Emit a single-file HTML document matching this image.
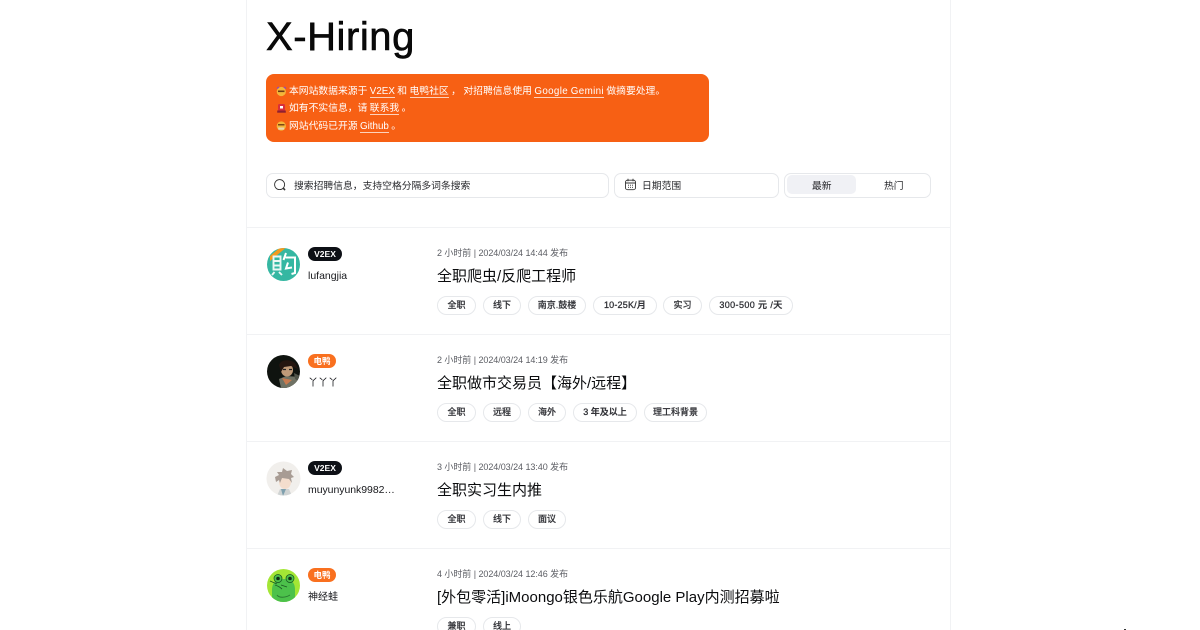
<!DOCTYPE html>
<html lang="zh"><head><meta charset="utf-8"><title>X-Hiring</title>
<style>
*{box-sizing:border-box}
html,body{margin:0;padding:0;width:1200px;height:630px;overflow:hidden;background:#fff}
body{font-family:"Liberation Sans","Noto Sans CJK SC",sans-serif;color:#0a0a0a;position:relative}
.a{position:absolute;white-space:nowrap}
.wrap{left:246px;top:-2px;width:705px;height:640px;border:1px solid #f1f2f4;border-width:0 1px}
.hr{left:247px;width:703px;height:1px;background:#f1f2f4}
h1{margin:0;position:absolute;left:266px;top:14px;font-size:40px;line-height:46px;font-weight:400;letter-spacing:.55px;-webkit-text-stroke:.6px #000}
.banner{left:266px;top:74px;width:443px;height:68px;background:#f76014;border-radius:8px}
.bt{color:#fff;font-size:9.8px;line-height:14px;word-spacing:-.3px}
.bt u{text-decoration:none;border-bottom:1px solid #fdd3bd;padding-bottom:0}
.box{border:1px solid #e6e8eb;border-radius:7px;height:25px;top:173px;background:#fff}
.ctl{font-size:9.8px;line-height:14px;color:#27282c;top:179.5px}
.seg{left:787px;top:175px;width:69px;height:19px;border-radius:5px;background:#f0f1f5}
.badge{left:308px;height:14px;border-radius:7px;color:#fff;font-size:8.5px;line-height:14px;font-weight:700;text-align:center}
.v{width:34px;background:#0d1016}
.d{width:28px;background:#f9701f}
.name{left:308px;font-size:10.5px;line-height:14px;color:#17181c}
.cn{font-size:10px}
.time{left:437px;font-size:9px;line-height:12px;color:#5b5d63;letter-spacing:-.05px}
.title{left:437px;font-size:15px;line-height:22px;color:#0b0c0e}
.tag{height:19px;border:1px solid #e6e8eb;border-radius:10px;font-size:9px;line-height:17px;text-align:center;color:#303136;font-weight:500;background:#fff;-webkit-text-stroke:.15px #303136}
.num{-webkit-text-stroke:.3px #303136}
.av{left:267px;width:33px;height:33px}
</style></head><body>
<div class="a wrap"></div>
<h1>X-Hiring</h1>
<div class="a banner"></div>
<svg class="a" style="left:276px;top:86px" width="11" height="46" viewBox="0 0 11 46"><circle cx="5.3" cy="5.5" r="4.6" fill="#f4b63a"/><path d="M1 2.5 3 1M8 1 10 2.5" stroke="#8b4cc4" stroke-width="1.4"/><rect x="2" y="4.5" width="6.5" height="1.6" fill="#6d3a16"/><rect x="2" y="18" width="7" height="8" rx="1.6" fill="#d92f3b"/><rect x="1.2" y="24.5" width="8.6" height="2.2" fill="#8f2030"/><rect x="4" y="20" width="3" height="2.5" fill="#fff"/><circle cx="5.3" cy="40" r="4.6" fill="#f4b63a"/><rect x="2" y="38" width="6.5" height="1.5" fill="#7c4616"/><rect x="2.2" y="41.5" width="6" height="2.2" fill="#e9d5b0"/></svg>
<div class="a bt" style="left:289px;top:85px">本网站数据来源于 <u>V2EX</u> 和 <u>电鸭社区</u> ， 对招聘信息使用 <u style="letter-spacing:.35px">Google Gemini</u> 做摘要处理。</div>
<div class="a bt" style="left:289px;top:102px">如有不实信息，请 <u>联系我</u> 。</div>
<div class="a bt" style="left:289px;top:120px">网站代码已开源 <u>Github</u> 。</div>

<div class="a box" style="left:266px;width:343px"></div>
<svg class="a" style="left:273px;top:178px" width="14" height="14" viewBox="0 0 14 14" fill="none" stroke="#333" stroke-width=".9"><circle cx="6.6" cy="6.6" r="5"/><path d="M10.6 10.6 11.6 11.6" stroke-width="1.6" stroke-linecap="round"/></svg>
<div class="a ctl" style="left:294px">搜索招聘信息，支持空格分隔多词条搜索</div>
<div class="a box" style="left:614px;width:165px"></div>
<svg class="a" style="left:624px;top:178px" width="13" height="13" viewBox="0 0 13 13" fill="none" stroke="#333" stroke-width=".9"><rect x="1.5" y="2.2" width="10" height="9.5" rx="2"/><path d="M1.5 5h10M4 .8v2.4M9 .8v2.4"/><path d="M4 7.2h5M4 9.3h5" stroke-dasharray="1 1"/></svg>
<div class="a ctl" style="left:642px">日期范围</div>
<div class="a box" style="left:784px;width:147px"></div>
<div class="a seg"></div>
<div class="a ctl" style="left:812px">最新</div>
<div class="a ctl" style="left:884px">热门</div>

<div class="a hr" style="top:227px"></div>
<div class="a hr" style="top:334px"></div>
<div class="a hr" style="top:441px"></div>
<div class="a hr" style="top:548px"></div>

<svg class="a av" style="top:248px" viewBox="0 0 33 33"><defs><clipPath id="c1"><circle cx="16.5" cy="16.5" r="16.5"/></clipPath></defs><g clip-path="url(#c1)"><rect width="33" height="33" fill="#35b7a2"/><path d="M3 8 15-2h6L3 13z" fill="#f39a1f"/><path d="M6.5 8.5h7v13h-7zM6.5 13h7M6.5 17.5h7M7.5 24l-2.500 3M12 24l3 3" fill="none" stroke="#e9f7f4" stroke-width="1.9"/><path d="M19 5l-2.500 7M18.5 9.5h9.500v15.500l-3.500 1M21 14.500l-2 6 6-1" fill="none" stroke="#fff" stroke-width="2"/></g></svg>
<div class="a badge v" style="top:247px">V2EX</div>
<div class="a name" style="top:269px">lufangjia</div>
<div class="a time" style="top:247px">2 小时前 | 2024/03/24 14:44 发布</div>
<div class="a title" style="top:266px">全职爬虫/反爬工程师</div>
<div class="a tag" style="left:437px;top:296px;width:39px">全职</div>
<div class="a tag" style="left:483px;top:296px;width:38px">线下</div>
<div class="a tag" style="left:528px;top:296px;width:58px">南京.鼓楼</div>
<div class="a tag num" style="left:593px;top:296px;width:64px;letter-spacing:.2px">10-25K/月</div>
<div class="a tag" style="left:663px;top:296px;width:39px">实习</div>
<div class="a tag num" style="left:709px;top:296px;width:84px;letter-spacing:.4px">300-500 元 /天</div>

<svg class="a av" style="top:355px" viewBox="0 0 33 33"><defs><clipPath id="c2"><circle cx="16.5" cy="16.5" r="16.5"/></clipPath></defs><g clip-path="url(#c2)"><rect width="33" height="33" fill="#0f130f"/><path d="M14 33 12 24l7-3 14 1v11z" fill="#6f7264"/><path d="M15 23l10 2-6 5z" fill="#c87a4e"/><ellipse cx="20" cy="15" rx="6" ry="6.5" fill="#bf9a78"/><path d="M12 10c2-6 11-6 16-2l3 6-7-3-7 1-3 5z" fill="#241610"/><path d="M16 14.500h3M22 14.500h3" stroke="#222" stroke-width="1.3"/><path d="M27 18l6 3v6l-5-3z" fill="#50544a"/></g></svg>
<div class="a badge d" style="top:354px">电鸭</div>
<div class="a name cn" style="top:377px">丫丫丫</div>
<div class="a time" style="top:354px">2 小时前 | 2024/03/24 14:19 发布</div>
<div class="a title" style="top:373px">全职做市交易员【海外/远程】</div>
<div class="a tag" style="left:437px;top:403px;width:39px">全职</div>
<div class="a tag" style="left:483px;top:403px;width:38px">远程</div>
<div class="a tag" style="left:528px;top:403px;width:38px">海外</div>
<div class="a tag num" style="left:573px;top:403px;width:64px">3 年及以上</div>
<div class="a tag" style="left:644px;top:403px;width:63px">理工科背景</div>

<svg class="a" style="left:266px;top:461px" width="35" height="35" viewBox="0 0 35 35"><defs><clipPath id="c3"><circle cx="17.5" cy="17.5" r="17"/></clipPath></defs><g clip-path="url(#c3)"><rect width="35" height="35" fill="#f1efec"/><path d="M14 28l-3 7h15l-3-7z" fill="#cfd3d3"/><path d="M15 28l2 7 3-7z" fill="#7fa0ae"/><ellipse cx="19" cy="21" rx="6" ry="7" fill="#f3ddcd"/><path d="M9 16l4-2-2-3 5 0 1-4 4 3 5-1-1 4 3 3-3 1 1 5-3-4-7-1-2 5-1-3-3 2z" fill="#a89c94"/></g></svg>
<div class="a badge v" style="top:461px">V2EX</div>
<div class="a name" style="top:483px;letter-spacing:-.05px">muyunyunk9982…</div>
<div class="a time" style="top:461px">3 小时前 | 2024/03/24 13:40 发布</div>
<div class="a title" style="top:480px">全职实习生内推</div>
<div class="a tag" style="left:437px;top:510px;width:39px">全职</div>
<div class="a tag" style="left:483px;top:510px;width:38px">线下</div>
<div class="a tag" style="left:528px;top:510px;width:38px">面议</div>

<svg class="a av" style="top:569px" viewBox="0 0 33 33"><defs><clipPath id="c4"><circle cx="16.5" cy="16.5" r="16.5"/></clipPath></defs><g clip-path="url(#c4)"><rect width="33" height="33" fill="#a3e635"/><path d="M5 33V21c0-8 5-11 12-11s11 3 11 11v12z" fill="#4cc14b"/><circle cx="11" cy="9.5" r="4" fill="#4cc14b" stroke="#14501f" stroke-width=".7"/><circle cx="23" cy="9.5" r="4" fill="#4cc14b" stroke="#14501f" stroke-width=".7"/><circle cx="11" cy="9.5" r="1.8" fill="#0f2f15"/><circle cx="23" cy="9.5" r="1.8" fill="#0f2f15"/><path d="M8 16c3 1 5 2 7 4M14 16l6 2M3 12l7 3" stroke="#1d5a24" stroke-width=".9" fill="none"/><path d="M10 26c2 3 8 3 13 0" stroke="#2a7a32" fill="none"/></g></svg>
<div class="a badge d" style="top:568px">电鸭</div>
<div class="a name cn" style="top:591px">神经蛙</div>
<div class="a time" style="top:568px">4 小时前 | 2024/03/24 12:46 发布</div>
<div class="a title" style="top:587px">[外包零活]iMoongo银色乐航Google Play内测招募啦</div>
<div class="a tag" style="left:437px;top:617px;width:39px">兼职</div>
<div class="a tag" style="left:483px;top:617px;width:38px">线上</div>
<div class="a" style="left:1124px;top:629px;width:2px;height:1px;background:#333"></div>
</body></html>
